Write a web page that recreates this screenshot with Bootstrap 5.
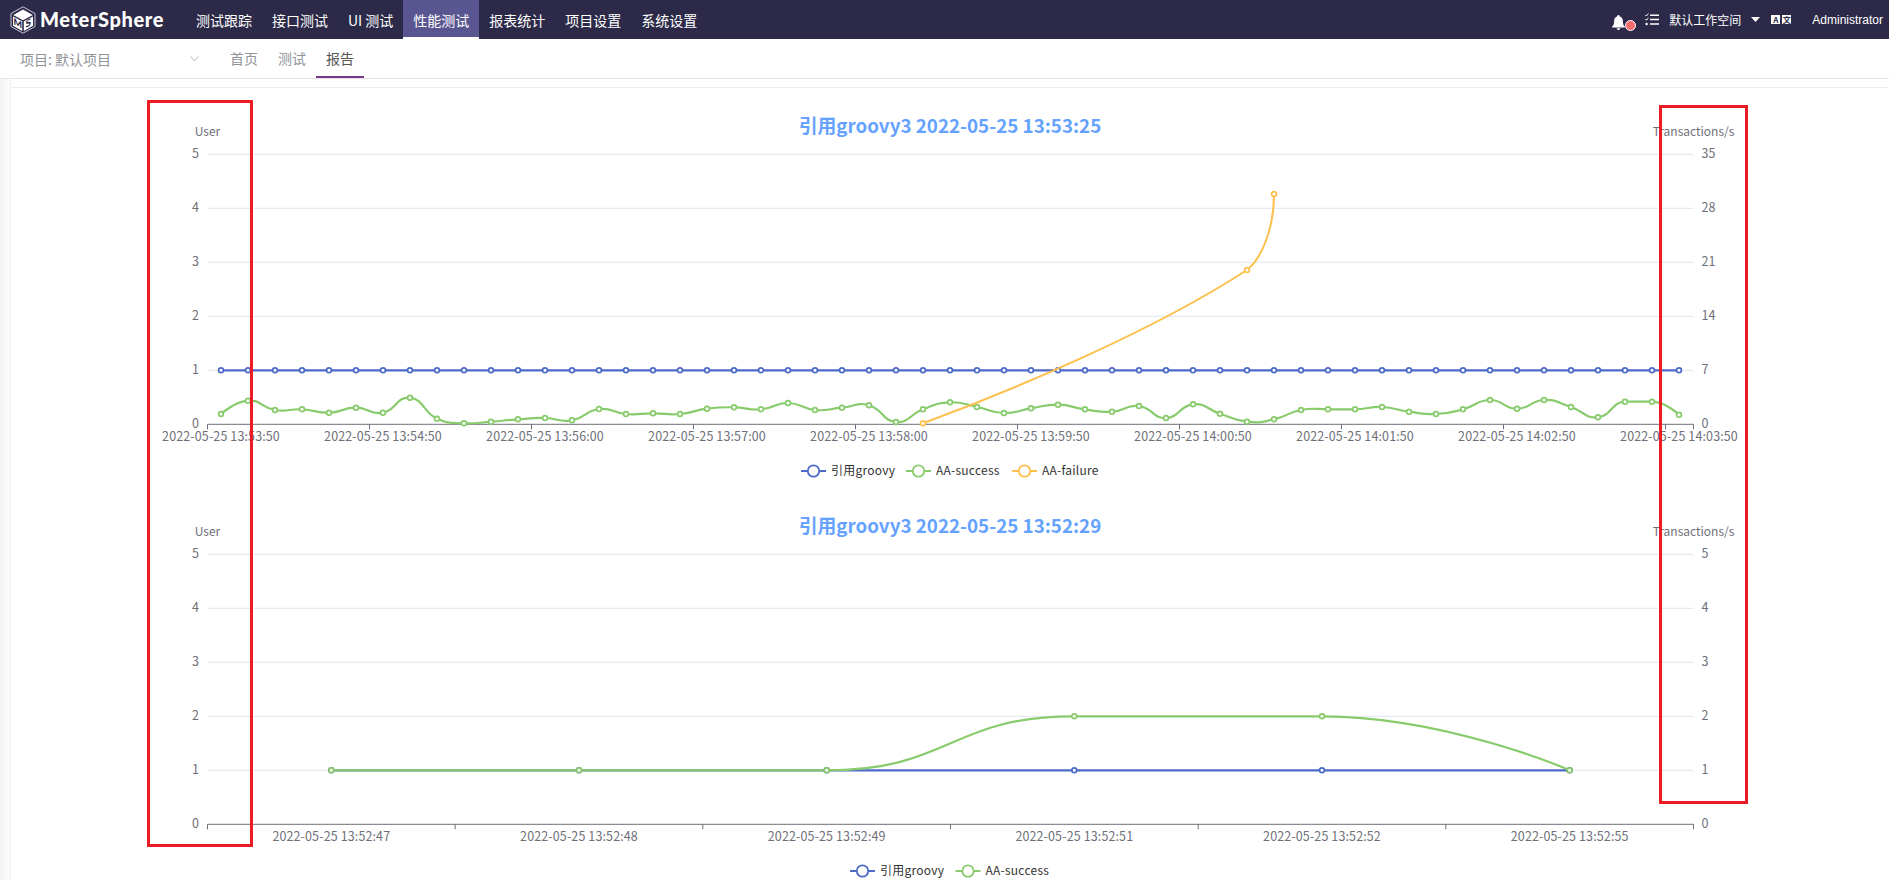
<!DOCTYPE html>
<html lang="zh">

<head>
  <meta charset="UTF-8">
  <title>MeterSphere</title>
  <link href="https://cdn.jsdelivr.net/npm/bootstrap@5.3.0/dist/css/bootstrap.min.css" rel="stylesheet">
  <style>
    body {
      font-family: "Noto Sans CJK SC", "Noto Sans", sans-serif;
      font-size: 14px;
      height: 100vh;
      overflow: hidden;
      background: #fff;
    }

    .ms-top {
      height: 39px;
      background: #2c2a48;
      color: #fff;
    }

    .ms-brand {
      width: 186px;
      padding-left: 10px;
      gap: 4px;
    }

    .ms-brand-text {
      font-family: "Lato", sans-serif;
      font-weight: 900;
      font-size: 20px;
      letter-spacing: .6px;
      line-height: 39px;
    }

    .ms-top .navbar-nav .nav-link {
      height: 39px;
      line-height: 40px;
      padding: 0 10px;
      color: #fff;
      font-size: 14px;
    }

    .ms-top .navbar-nav .nav-link.active {
      background: #595591;
      color: #fff;
      border-bottom: 2px solid #fff;
    }

    .ms-top-right {
      font-size: 12px;
      padding-right: 6px;
    }

    .ms-dot {
      width: 11px;
      height: 11px;
      border-radius: 50%;
      background: #f56c6c;
      border: 1px solid #fff;
      top: 20px;
      left: 13px;
    }

    .ms-bell {
      width: 27px;
      height: 39px;
    }

    .ms-bell svg {
      margin-top: 5px;
    }

    .ms-tasks {
      margin-left: 6px;
    }

    .ms-space {
      margin-left: 10px;
    }

    .ms-caret {
      margin-left: 10px;
    }

    .ms-langs {
      gap: 2px;
      margin-left: 11px;
    }

    .ms-lang {
      width: 9px;
      height: 9px;
      font-size: 8px;
      line-height: 9px;
      font-weight: 700;
      text-align: center;
      color: #2c2a48;
      background: #fff;
    }

    .ms-user {
      font-family: "Liberation Sans", sans-serif;
      margin-left: 21px;
    }

    .ms-sub {
      height: 40px;
      border-bottom: 1px solid #e6e6e6;
    }

    .ms-project {
      width: 220px;
      padding-left: 20px;
      padding-right: 21px;
      padding-top: 1px;
      color: #909399;
    }

    .ms-sub .nav-link {
      height: 39px;
      line-height: 39px;
      padding: 0 10px;
      color: #909399;
      font-size: 14px;
      border-bottom: 2px solid transparent;
    }

    .ms-sub .nav-link.active {
      color: #555;
      border-bottom-color: #783887;
    }

    .ms-body {
      padding-left: 11px;
    }

    .ms-strip {
      width: 11px;
      left: 0;
      top: 0;
      bottom: 0;
      background: linear-gradient(to right, #f3f3f3, #fdfdfd);
      border-right: 1px solid #f0f0f0;
    }

    .ms-topline {
      height: 9px;
      border-bottom: 1px solid #eee;
    }

    .chart-box {
      height: 400px;
    }

    .chart-box svg {
      display: block;
    }

    .chart-box text {
      font-family: "Noto Sans CJK SC", "Noto Sans", sans-serif;
      font-size: 12px;
      fill: #6e7079;
    }

    .chart-box .axis-label {
      font-size: 12.5px;
      letter-spacing: .12px;
    }

    .chart-box .chart-title {
      font-size: 18.8px;
      font-weight: 700;
      fill: #65a2ff;
    }

    .chart-box .legend-text {
      fill: #333;
      letter-spacing: .25px;
    }

    .red-mark {
      border: 3px solid #ed1c24;
      z-index: 5;
    }

    .red-left {
      left: 147px;
      top: 100px;
      width: 106px;
      height: 747px;
    }

    .red-right {
      left: 1659px;
      top: 105px;
      width: 89px;
      height: 699px;
    }
  </style>
</head>

<body>

  <nav class="navbar navbar-expand p-0 ms-top flex-nowrap">
    <div class="d-flex align-items-center ms-brand">
      <svg width="26" height="28" viewBox="0 0 26 28">
        <path d="M13 .8 25 7.500v13L13 27.200 1 20.500v-13z" fill="none" stroke="#c9c8d6" stroke-width="1" />
        <path d="M13 3.400 22.800 9 13 14.200 3.200 9z" fill="#fff" />
        <path d="M3 10.400 12.200 15.300V25L3 19.800z" fill="#fff" />
        <path d="M23 10.400 13.800 15.300V25L23 19.800z" fill="#fff" />
        <text x="0" y="0" transform="translate(3.600 18.200) skewY(28)" font-size="9" font-weight="900" fill="#2c2a48" font-family="Lato">M</text>
        <text x="0" y="0" transform="translate(15.600 22) skewY(-28)" font-size="10" font-weight="900" fill="#2c2a48" font-family="Lato">S</text>
      </svg>
      <span class="ms-brand-text">MeterSphere</span>
    </div>
    <ul class="navbar-nav">
      <li class="nav-item"><a class="nav-link" href="#">测试跟踪</a></li>
      <li class="nav-item"><a class="nav-link" href="#">接口测试</a></li>
      <li class="nav-item"><a class="nav-link" href="#">UI 测试</a></li>
      <li class="nav-item"><a class="nav-link active" href="#">性能测试</a></li>
      <li class="nav-item"><a class="nav-link" href="#">报表统计</a></li>
      <li class="nav-item"><a class="nav-link" href="#">项目设置</a></li>
      <li class="nav-item"><a class="nav-link" href="#">系统设置</a></li>
    </ul>

    <div class="d-flex align-items-center ms-auto ms-top-right">
      <div class="position-relative ms-bell d-flex align-items-center">
        <svg width="13" height="15" viewBox="0 0 14 16">
          <path d="M7 0c.7 0 1.200.5 1.200 1.200C10.400 1.800 11.700 3.700 11.700 6c0 3.500.7 5 2.300 6.600V13.400H0V12.600C1.600 11 2.300 9.500 2.300 6 2.300 3.700 3.600 1.800 5.800 1.200 5.800.5 6.300 0 7 0zM5 14.300h4c0 1-1 1.700-2 1.700s-2-.7-2-1.700z" fill="#fff" />
        </svg>
        <span class="position-absolute ms-dot"></span>
      </div>
      <svg class="ms-tasks" width="14" height="13" viewBox="0 0 14 13">
        <path d="M5 2.200h9M5 6.500h9M5 11h9" stroke="#fff" stroke-width="1.500" fill="none" />
        <path d="M.3 1.800 1.400 3 3.400.6M.3 6 1.400 7.200 3.400 4.800" stroke="#fff" stroke-width="1" fill="none" />
        <circle cx="1.600" cy="11" r="1.200" fill="#fff" />
      </svg>
      <span class="ms-space">默认工作空间</span>
      <svg class="ms-caret" width="9" height="5" viewBox="0 0 9 5">
        <path d="M0 0h9L4.500 5z" fill="#fff" />
      </svg>
      <div class="d-flex align-items-center ms-langs">
        <span class="ms-lang">A</span>
        <span class="ms-lang">文</span>
      </div>
      <span class="ms-user">Administrator</span>
    </div>
  </nav>

  <div class="d-flex align-items-stretch ms-sub">
    <div class="d-flex align-items-center justify-content-between ms-project">
      <span>项目: 默认项目</span>
      <svg width="9" height="6" viewBox="0 0 9 6">
        <path d="M.5 .5 4.500 5 8.500 .5" stroke="#b5b7bd" fill="none" />
      </svg>
    </div>
    <ul class="nav">
      <li class="nav-item"><a class="nav-link" href="#">首页</a></li>
      <li class="nav-item"><a class="nav-link" href="#">测试</a></li>
      <li class="nav-item"><a class="nav-link active" href="#">报告</a></li>
    </ul>
  </div>

  <div class="position-relative">
    <div class="position-absolute ms-strip"></div>
    <div class="ms-body">
      <div class="ms-topline"></div>
    </div>
    <div id="chart1" class="chart-box"></div>
    <div id="chart2" class="chart-box"></div>
  </div>

  <div class="position-absolute red-mark red-left"></div>
  <div class="position-absolute red-mark red-right"></div>

  <script>
    const BLUE = '#4e6ac8', GREEN = '#88cb6c', YELLOW = '#fdc04e';
    const LEFT = 207.5, RIGHT = 1693.5, TOP = 66.3, STEP = 54;
    const BASE = TOP + STEP * 5;

    function smoothPath(pts) {
      let d = 'M' + pts[0][0] + ' ' + pts[0][1];
      const tan = pts.map((p, i) => {
        if (i === 0 || i === pts.length - 1) return [0, 0];
        const a = pts[i - 1], b = pts[i + 1];
        let dy = (b[1] - a[1]) * 0.25;
        if (a[1] === p[1] || b[1] === p[1]) dy = 0;
        return [(b[0] - a[0]) * 0.25, dy];
      });
      for (let i = 1; i < pts.length; i++) {
        const p = pts[i - 1], q = pts[i];
        const y1 = Math.min(p[1] + tan[i - 1][1], BASE);
        const y2 = Math.min(q[1] - tan[i][1], BASE);
        d += ' C' + (p[0] + tan[i - 1][0]) + ' ' + y1 + ' ' + (q[0] - tan[i][0]) + ' ' + y2 + ' ' + q[0] + ' ' + q[1];
      }
      return d;
    }

    function series(pts, color, width, path) {
      let s = '<path d="' + (path || smoothPath(pts)) + '" fill="none" stroke="' + color + '" stroke-width="' + width + '"/>';
      pts.forEach(p => {
        s += '<circle cx="' + p[0] + '" cy="' + p[1] + '" r="2.4" fill="#fff" stroke="' + color + '" stroke-width="1.7"/>';
      });
      return s;
    }

    function legendItem(x, textX, color, label, y) {
      return '<path d="M' + x + ' ' + y + 'h25" stroke="' + color + '" stroke-width="2"/>' +
        '<circle cx="' + (x + 12.5) + '" cy="' + y + '" r="5.7" fill="#fff" stroke="' + color + '" stroke-width="1.8"/>' +
        '<text class="legend-text" x="' + textX + '" y="' + (y + 4) + '">' + label + '</text>';
    }

    function drawChart(id, o) {
      let s = '<svg width="1889" height="400" viewBox="0 0 1889 400">';
      o.leftLabels.forEach((v, i) => {
        const y = BASE - i * STEP;
        if (i > 0) s += '<path d="M' + LEFT + ' ' + y + 'H' + RIGHT + '" stroke="#e0e6f1"/>';
        s += '<text class="axis-label" x="199" y="' + (y + 4) + '" text-anchor="end">' + v + '</text>';
        s += '<text class="axis-label" x="1701.5" y="' + (y + 4) + '">' + o.rightLabels[i] + '</text>';
      });
      s += '<path d="M' + LEFT + ' ' + BASE + 'H' + RIGHT + '" stroke="#6e7079"/>';
      o.ticks.forEach(x => {
        s += '<path d="M' + x + ' ' + BASE + 'v5" stroke="#6e7079"/>';
      });
      o.labels.forEach(l => {
        s += '<text class="axis-label" x="' + l[0] + '" y="' + (BASE + 16.5) + '" text-anchor="middle">' + l[1] + '</text>';
      });
      s += '<text x="207.5" y="48" text-anchor="middle">User</text>';
      s += '<text x="1693.5" y="48" text-anchor="middle">Transactions/s</text>';
      s += '<text class="chart-title" x="950" y="45" text-anchor="middle">' + o.title + '</text>';
      s += o.body;
      s += o.legend + '</svg>';
      document.getElementById(id).innerHTML = s;
    }

    // first chart: 55 points
    const band = 27, first = LEFT + band / 2;
    const xAt = k => first + k * band;
    const greenZoom = [972, 932, 960, 958, 968, 953, 968, 923, 986, 1000, 995, 988, 984, 991, 957, 972, 970, 972, 956, 952, 958,
      939, 960, 953, 946, 996, 958, 937, 951, 969, 955, 944, 958, 965, 948, 984, 943, 971, 995, 988, 960, 958, 958, 951, 965,
      972, 958, 930, 956, 930, 951, 982, 935, 935, 974];
    const greenPts = greenZoom.map((z, k) => [xAt(k), +(z / 3 + 2).toFixed(1)]);
    const bluePts = greenZoom.map((z, k) => [xAt(k), BASE - STEP]);
    const yellowPts = [[xAt(26), 335.3], [xAt(38), 182], [xAt(39), 106]];
    const yellowPath = 'M' + xAt(26) + ' 335.3 C1010 303 1150 245 ' + xAt(38) + ' 182 C1262 170 ' + xAt(39) + ' 140 ' + xAt(39) + ' 106';

    const labels1 = ['13:53:50', '13:54:50', '13:56:00', '13:57:00', '13:58:00', '13:59:50', '14:00:50', '14:01:50', '14:02:50'];
    const chart1Labels = labels1.map((t, i) => [xAt(i * 6), '2022-05-25 ' + t]);
    chart1Labels.push([xAt(54), '2022-05-25 14:03:50']);
    const ticks1 = [];
    for (let i = 0; i <= 9; i++) ticks1.push(LEFT + i * 162);
    ticks1.push(RIGHT);

    drawChart('chart1', {
      title: '引用groovy3 2022-05-25 13:53:25',
      leftLabels: [0, 1, 2, 3, 4, 5],
      rightLabels: [0, 7, 14, 21, 28, 35],
      ticks: ticks1,
      labels: chart1Labels,
      body: series(bluePts, BLUE, 2.3) + series(greenPts, GREEN, 2.2) + series(yellowPts, YELLOW, 2, yellowPath),
      legend: legendItem(801, 831, BLUE, '引用groovy', 383) + legendItem(906, 936, GREEN, 'AA-success', 383) + legendItem(1012, 1042, YELLOW, 'AA-failure', 383)
    });

    // second chart: 6 points
    const band2 = (RIGHT - LEFT) / 6;
    const x2 = k => +(LEFT + band2 / 2 + k * band2).toFixed(1);
    const y1 = BASE - STEP, y2 = BASE - 2 * STEP;
    const blue2 = [0, 1, 2, 3, 4, 5].map(k => [x2(k), y1]);
    const green2 = [y1, y1, y1, y2, y2, y1].map((y, k) => [x2(k), y]);
    const labels2 = ['47', '48', '49', '51', '52', '55'].map((t, k) => [x2(k), '2022-05-25 13:52:' + t]);
    const ticks2 = [0, 1, 2, 3, 4, 5, 6].map(k => LEFT + k * band2);

    drawChart('chart2', {
      title: '引用groovy3 2022-05-25 13:52:29',
      leftLabels: [0, 1, 2, 3, 4, 5],
      rightLabels: [0, 1, 2, 3, 4, 5],
      ticks: ticks2,
      labels: labels2,
      body: series(blue2, BLUE, 2.3) + series(green2, GREEN, 2.2),
      legend: legendItem(850, 880, BLUE, '引用groovy', 383) + legendItem(955.5, 985.5, GREEN, 'AA-success', 383)
    });
  </script>
  <script src="https://cdn.jsdelivr.net/npm/bootstrap@5.3.0/dist/js/bootstrap.bundle.min.js"></script>
</body>

</html>
